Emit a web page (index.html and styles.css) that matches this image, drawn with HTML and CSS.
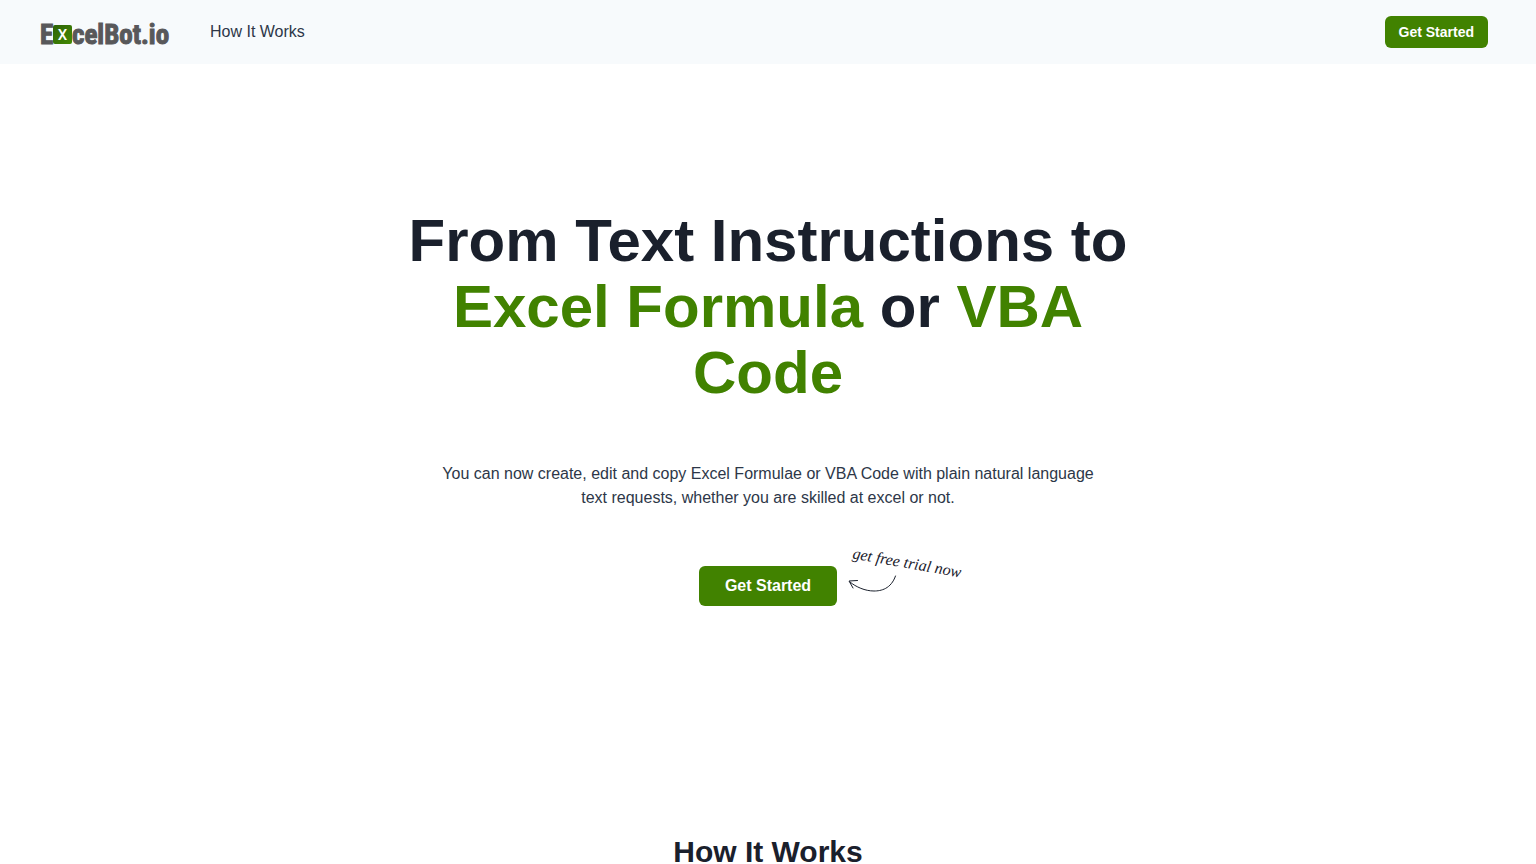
FILE: index.html
```html
<!DOCTYPE html>
<html lang="en">
<head>
<meta charset="utf-8">
<meta name="viewport" content="width=device-width, initial-scale=1">
<title>ExcelBot.io</title>
<link rel="stylesheet" href="styles.css">
</head>
<body>
<header class="header">
  <a class="logo" href="#" aria-label="ExcelBot.io">
    <svg width="130" height="32" viewBox="0 0 130 32" aria-hidden="true">
      <defs>
        <linearGradient id="tile" x1="0" y1="0" x2="1" y2="1">
          <stop offset="0" stop-color="#2c6206"/>
          <stop offset="1" stop-color="#448a04"/>
        </linearGradient>
      </defs>
      <text class="logo-word" x="0" y="28">E</text>
      <rect x="13" y="9" width="19" height="19" rx="2" fill="url(#tile)"/>
      <text class="logo-x" x="22.5" y="24">X</text>
      <text class="logo-word" x="32" y="28">celBot.io</text>
    </svg>
  </a>
  <nav class="nav"><a href="#how">How It Works</a></nav>
  <button class="button button-small" type="button">Get Started</button>
</header>
<main>
  <section class="hero">
    <h1 class="hero-title">From Text Instructions to <span class="accent">Excel Formula</span> or <span class="accent">VBA Code</span></h1>
    <p class="hero-text">You can now create, edit and copy Excel Formulae or VBA Code with plain natural language text requests, whether you are skilled at excel or not.</p>
    <div class="cta">
      <button class="button" type="button">Get Started</button>
      <svg class="cta-arrow" width="50" height="20" viewBox="0 0 50 20" fill="none" stroke="currentColor" stroke-linecap="round" aria-hidden="true">
        <path d="M48.5 2C44 15 34 17 27 17C18 17 9 13 3 8"/>
        <path d="M10.5 6.5L2 7L6 14"/>
      </svg>
      <span class="cta-note">get free trial now</span>
    </div>
  </section>
  <section class="how" id="how">
    <h2 class="how-title">How It Works</h2>
  </section>
</main>
</body>
</html>
```
FILE: styles.css
```css
* {
  box-sizing: border-box;
}

body {
  margin: 0;
  background: #fff;
  color: #1a202c;
  font-family: "Liberation Sans", Arial, sans-serif;
  font-size: 16px;
  line-height: 24px;
}

h1, h2, p {
  margin: 0;
}

.header {
  display: flex;
  align-items: center;
  height: 64px;
  padding: 0 48px 0 40px;
  background: #f7fafc;
}

.logo {
  display: flex;
  margin-right: 40px;
}

.logo-word {
  fill: #58585a;
  stroke: #58585a;
  stroke-width: 1px;
  font-family: "Roboto Condensed", "Liberation Sans Narrow", "Arial Narrow", sans-serif;
  font-size: 27px;
  font-weight: 700;
}

.logo-x {
  fill: #fff;
  font-family: Roboto, "Liberation Sans", sans-serif;
  font-size: 15px;
  font-weight: 500;
  text-anchor: middle;
}

.nav {
  flex: 1;
}

.nav a {
  color: #2d3748;
  text-decoration: none;
}

.button {
  height: 40px;
  padding: 0 26px;
  border: 0;
  border-radius: 6px;
  background: #418200;
  color: #fff;
  font-family: inherit;
  font-size: 16px;
  font-weight: 700;
  cursor: pointer;
}

.button-small {
  height: 32px;
  padding: 0 14px;
  font-size: 14px;
}

.hero {
  display: flex;
  flex-direction: column;
  align-items: center;
  gap: 56px;
  padding: 144px 16px 228px;
  text-align: center;
}

.hero-title {
  max-width: 768px;
  font-size: 60px;
  font-weight: 700;
  line-height: 66px;
}

.accent {
  color: #418200;
}

.hero-text {
  max-width: 672px;
  color: #2d3748;
}

.cta {
  position: relative;
}

.cta-arrow {
  position: absolute;
  top: 8px;
  left: 148px;
}

.cta-note {
  position: absolute;
  top: -15px;
  left: 153px;
  font-family: "Liberation Serif", "Times New Roman", serif;
  font-style: italic;
  white-space: nowrap;
  transform: rotate(10deg);
}

.how {
  padding: 0 16px 64px;
  text-align: center;
}

.how-title {
  font-size: 30px;
  font-weight: 700;
  line-height: 36px;
}
```
